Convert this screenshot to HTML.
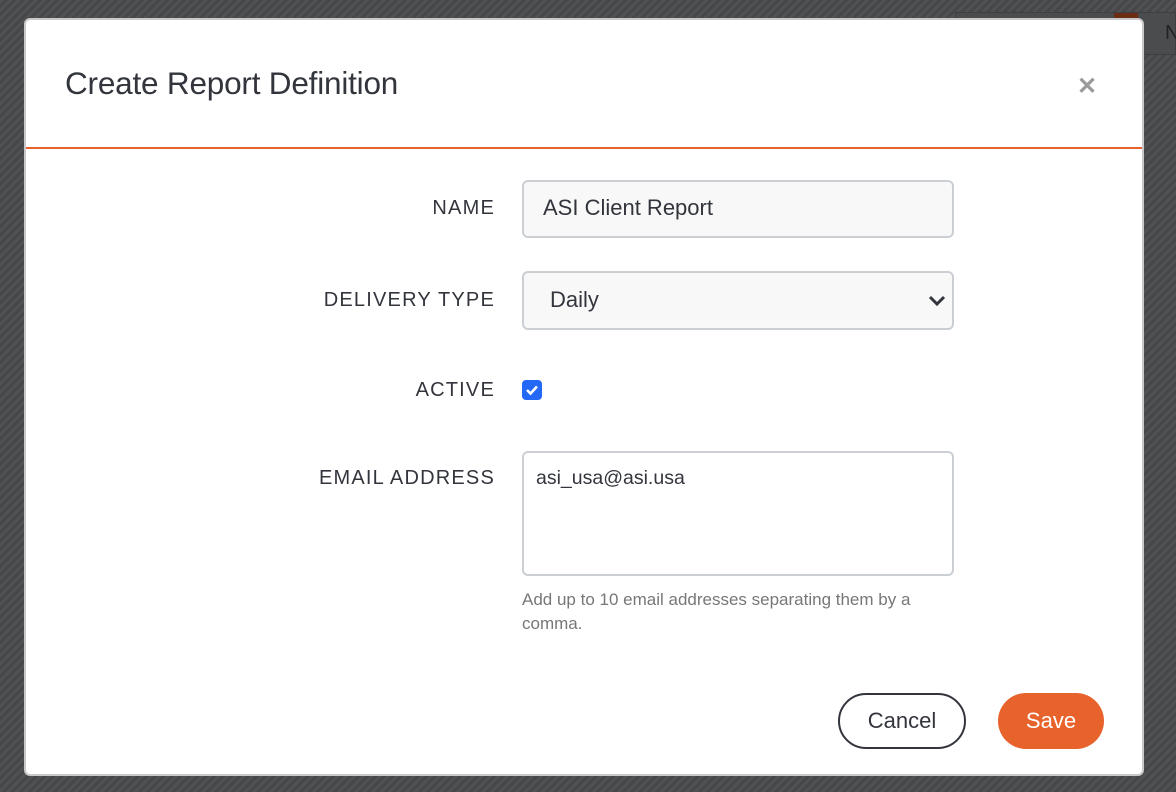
<!DOCTYPE html>
<html><head><meta charset="utf-8"><style>
*{box-sizing:border-box;margin:0;padding:0}
body{width:1176px;height:792px;overflow:hidden;position:relative;font-family:"Liberation Sans",sans-serif;color:#33353d;
background:repeating-linear-gradient(135deg,#505152 0 3px,#464748 3px 6px);}
.topbar{position:absolute;left:955px;top:12px;width:221px;height:43px;border:1px solid #3e3f40;background:#4b4c4d}
.topbar .o{position:absolute;left:158px;top:0;width:24px;height:43px;background:#6a2c12}
.modal{position:absolute;left:24px;top:18px;width:1120px;height:758px;background:#fff;border:2px solid #c9c9c9;border-radius:6px}
.title{position:absolute;left:39px;top:45px;font-size:31.5px;color:#33353d;letter-spacing:-0.2px}
.x{position:absolute;left:1051px;top:52px;font-size:24px;color:#9a9a9a;font-weight:bold}
.hr{position:absolute;left:0;top:127px;width:1116px;height:2px;background:#e8622c}
.lab{position:absolute;right:647px;font-size:20px;letter-spacing:1.2px;color:#33353d;text-align:right;white-space:nowrap}
.inp{position:absolute;left:496px;width:432px;background:#f8f8f8;border:2px solid #cbcfd4;border-radius:6px;font-size:22px;color:#33353d}
.cb{position:absolute;left:496px;top:360px;width:20px;height:20px;background:#2469f5;border-radius:4px}
.help{position:absolute;left:496px;top:568px;width:440px;font-size:17px;line-height:24px;color:#777}
.btn{position:absolute;top:673px;height:56px;border-radius:28px;font-size:22px;text-align:center;line-height:52px}
</style></head><body>
<div class="topbar"><div class="o"></div></div>
<div style="position:absolute;left:1165px;top:22px;font-size:20px;color:#222">N</div>
<div class="modal">
<div class="title">Create Report Definition</div>
<div class="x">✕</div>
<div class="hr"></div>
<div class="lab" style="top:177px">NAME</div>
<div class="inp" style="top:160px;height:58px;padding:13px 0 0 19px">ASI Client Report</div>
<div class="lab" style="top:269px">DELIVERY TYPE</div>
<div class="inp" style="top:251px;height:59px;padding:14px 0 0 26px">Daily
<svg style="position:absolute;right:6px;top:21px" width="18" height="14" viewBox="0 0 18 14"><path d="M2 3l7 7 7-7" fill="none" stroke="#33353d" stroke-width="3"/></svg></div>
<div class="lab" style="top:359px">ACTIVE</div>
<div class="cb"><svg width="20" height="20" viewBox="0 0 20 20"><path d="M5 10l3.5 3.5L15 6.5" fill="none" stroke="#fff" stroke-width="2.6"/></svg></div>
<div class="lab" style="top:447px">EMAIL ADDRESS</div>
<div class="inp" style="top:431px;height:125px;background:#fff;font-size:19.5px;padding:14px 0 0 12px">asi_usa@asi.usa</div>
<div class="help">Add up to 10 email addresses separating them by a comma.</div>
<div class="btn" style="left:812px;width:128px;border:2px solid #33353d;color:#33353d">Cancel</div>
<div class="btn" style="left:972px;width:106px;background:#e8622c;color:#fff;line-height:56px">Save</div>
</div>
</body></html>
